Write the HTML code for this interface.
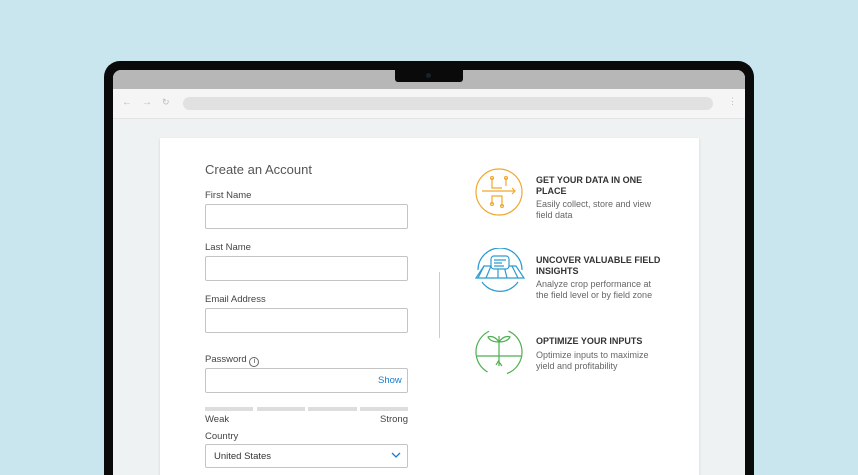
<!DOCTYPE html>
<html><head><style>
*{margin:0;padding:0;box-sizing:border-box}
html,body{width:858px;height:475px;overflow:hidden}
body{background:#c9e6ee;position:relative;font-family:"Liberation Sans",sans-serif}
.abs{position:absolute}
.lbl{position:absolute;left:205px;font-size:9.5px;color:#444}
.inp{position:absolute;left:205px;width:203px;height:25px;border:1px solid #c4c4c4;border-radius:2px;background:#fff}
.h{position:absolute;left:536px;font-size:9px;font-weight:bold;color:#333;line-height:11px;width:128px}
.d{position:absolute;left:536px;font-size:9px;color:#666;line-height:11px;width:125px}
</style></head><body>
<div class="abs" style="left:104px;top:61px;width:650px;height:430px;background:#0a0a0a;border-radius:16px"></div>
<div class="abs" style="left:113px;top:70px;width:632px;height:420px;background:#eff2f3;border-radius:8px 8px 0 0;overflow:hidden">
 <div class="abs" style="left:0;top:0;width:632px;height:19px;background:#b7b7b7"></div>
 <div class="abs" style="left:282px;top:0;width:68px;height:12px;background:#0a0a0a;border-radius:0 0 3px 3px"></div>
 <div class="abs" style="left:313px;top:3px;width:5px;height:5px;background:#1a2030;border-radius:50%"></div>
 <div class="abs" style="left:0;top:19px;width:632px;height:30px;background:#f5f5f5;border-bottom:1px solid #e4e4e4"></div>
 <div class="abs" style="left:9px;top:27px;font-size:10px;color:#bbb">←</div>
 <div class="abs" style="left:29px;top:27px;font-size:10px;color:#bbb">→</div>
 <div class="abs" style="left:49px;top:27px;font-size:9px;color:#bbb">↻</div>
 <div class="abs" style="left:70px;top:27px;width:530px;height:13px;background:#e1e1e1;border-radius:7px"></div>
 <div class="abs" style="left:615px;top:26px;font-size:9px;color:#bbb">⋮</div>
</div>
<div class="abs" style="left:160px;top:138px;width:539px;height:360px;background:#fff;box-shadow:0 1px 3px rgba(0,0,0,.12)"></div>
<div class="abs" style="left:205px;top:162px;font-size:13px;color:#555">Create an Account</div>
<div class="lbl" style="top:190px">First Name</div><div class="inp" style="top:204px"></div>
<div class="lbl" style="top:242px">Last Name</div><div class="inp" style="top:256px"></div>
<div class="lbl" style="top:294px">Email Address</div><div class="inp" style="top:308px"></div>
<div class="lbl" style="top:354px">Password <span style="display:inline-block;width:10px;height:10px;border:1px solid #666;border-radius:50%;font-size:7px;text-align:center;line-height:8px;vertical-align:-1px">i</span></div>
<div class="inp" style="top:368px"></div>
<div class="abs" style="left:378px;top:375px;font-size:9.5px;color:#1a7bd0">Show</div>
<div class="abs" style="left:205px;top:407px;width:48px;height:4px;background:#ddd"></div>
<div class="abs" style="left:257px;top:407px;width:48px;height:4px;background:#ddd"></div>
<div class="abs" style="left:308px;top:407px;width:49px;height:4px;background:#ddd"></div>
<div class="abs" style="left:360px;top:407px;width:48px;height:4px;background:#ddd"></div>
<div class="lbl" style="top:414px">Weak</div>
<div class="abs" style="left:380px;top:414px;font-size:9.5px;color:#444">Strong</div>
<div class="lbl" style="top:431px">Country</div>
<div class="inp" style="top:444px;height:24px"></div>
<div class="abs" style="left:214px;top:451px;font-size:9.5px;color:#333">United States</div>
<svg class="abs" style="left:391px;top:452px" width="10" height="7"><path d="M1 1l4 4 4-4" fill="none" stroke="#1a7bd0" stroke-width="1.3"/></svg>
<div class="abs" style="left:439px;top:272px;width:1px;height:66px;background:#ccc"></div>
<svg class="abs" style="left:474px;top:168px" width="50" height="50" fill="none" stroke="#f0a830" stroke-width="1.2"><circle cx="25" cy="24" r="23"/><path d="M8 23h32M18 10v10h10M32 10v8M18 36v-8h10v10"/><circle cx="18" cy="10" r="1.5"/><circle cx="32" cy="10" r="1.5"/><circle cx="18" cy="36" r="1.5"/><circle cx="28" cy="38" r="1.5"/><path d="M38 20l3 3-3 3"/></svg>
<div class="h" style="top:175px">GET YOUR DATA IN ONE PLACE</div>
<div class="d" style="top:199px">Easily collect, store and view field data</div>
<svg class="abs" style="left:474px;top:248px" width="52" height="50" fill="none" stroke="#2a9cd0" stroke-width="1.2"><path d="M4 22a22 22 0 0 1 44 0M8 34a22 22 0 0 0 36 0"/><path d="M2 30h48l-8-12H10z"/><path d="M10 18l-6 12M17 18l-5 12M24 18v12M30 18l3 12M38 18l6 12"/><rect x="17" y="8" width="18" height="13" rx="3" fill="#fff"/><path d="M20 12h12M20 15h8M20 18h10"/></svg>
<div class="h" style="top:255px">UNCOVER VALUABLE FIELD INSIGHTS</div>
<div class="d" style="top:279px">Analyze crop performance at the field level or by field zone</div>
<svg class="abs" style="left:474px;top:328px" width="50" height="50" fill="none" stroke="#4caf50" stroke-width="1.2"><circle cx="25" cy="24" r="23" stroke-dasharray="50 20" transform="rotate(-55 25 24)"/><path d="M3 28h44M25 8v30M25 14c-4-6-9-6-11-5 2 4 7 5 11 5zM25 14c4-6 9-6 11-5-2 4-7 5-11 5zM25 32l-3 5M25 34l3 4"/></svg>
<div class="h" style="top:336px">OPTIMIZE YOUR INPUTS</div>
<div class="d" style="top:350px">Optimize inputs to maximize yield and profitability</div>
</body></html>
